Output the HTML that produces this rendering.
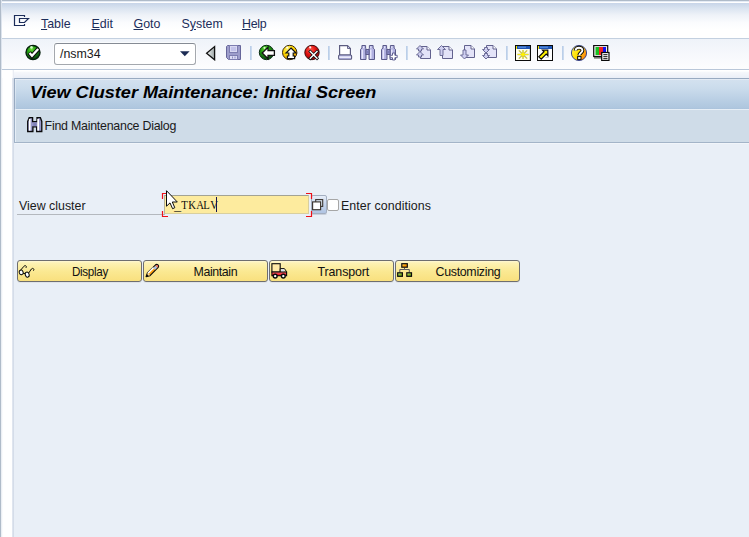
<!DOCTYPE html>
<html>
<head>
<meta charset="utf-8">
<title>View Cluster Maintenance</title>
<style>
html,body{margin:0;padding:0;}
body{width:749px;height:537px;overflow:hidden;position:relative;background:#fff;font-family:"Liberation Sans",sans-serif;font-size:12px;color:#1a1a1a;}
.abs{position:absolute;}
#menubar{left:0;top:0;width:749px;height:38px;background:linear-gradient(#afbbc9 0,#afbbc9 1px,#e4ebf5 1px,#e4ebf5 2px,#fff 2px,#fff 3px,#c9d6e9 3.500px,#d9e3f0 8px,#eef2f8 15px,#fbfcfe 23px,#fff 30px);}
#menuline{left:0;top:38px;width:749px;height:1px;background:#c3d0e0;}
#toolbar{left:0;top:39px;width:749px;height:30px;background:linear-gradient(#eff3f9,#f6f8fc 50%,#fdfdfe);}
#toolline{left:0;top:69px;width:749px;height:1px;background:#b9c7d9;}
#gap{left:0;top:70px;width:749px;height:8px;background:linear-gradient(#ffffff 0,#ffffff 12%,#f5f7fb 30%,#eaeef7 100%);}
#leftband{left:0;top:70px;width:14px;height:467px;background:linear-gradient(90deg,#afbbc9 0,#afbbc9 1px,#e3e8ef 1px,#f4f6f9 2px,#fff 3px,#fff 12px,#dfe5ef 12.5px,#cfd8e6 14px);}
#content{left:14px;top:78px;width:735px;height:459px;background:#e9eff7;}
#titlebar{left:14px;top:78px;width:735px;height:31px;box-sizing:border-box;border-top:1px solid #98aac1;border-left:1px solid #98aac1;background:linear-gradient(90deg,rgba(255,255,255,0.350) 0,rgba(255,255,255,0.350) 1px,rgba(255,255,255,0) 1px),linear-gradient(#e3ebf5 0,#e3ebf5 1px,#d3e1ef 1px,#cbdcec 30%,#b7cde3 75%,#aec6de 97%,#a8c0da 100%);}
#titleline{left:15px;top:109px;width:734px;height:1px;background:#e6eef6;}
#apptb{left:14px;top:109px;width:735px;height:33px;box-sizing:border-box;border-left:1px solid #a0b2c7;background:linear-gradient(90deg,#e6eef6 0,#e6eef6 1px,#cfdce8 1px);}
#apptbline{left:14px;top:142px;width:735px;height:1px;background:#a3b4c8;}
#apptbline2{left:15px;top:143px;width:734px;height:1px;background:#f1f5fa;}
.menu{top:17px;font-size:12.4px;line-height:14px;color:#1c2d5a;white-space:nowrap;}
.menu u{text-decoration:underline;text-underline-offset:1px;}
#title{left:30px;top:82px;font:italic bold 16.5px/20px "Liberation Sans",sans-serif;color:#000;white-space:nowrap;transform-origin:0 0;transform:scaleX(1.097);}
.lbl{white-space:nowrap;color:#1a1a1a;}
.btn{top:260px;height:22px;box-sizing:border-box;border:1px solid #6e6e70;border-radius:3px;background:linear-gradient(#fff8d4 0,#fdf2b4 2px,#fbe993 50%,#f9e07e 100%);box-shadow:0 1px 0 #dfe3e8;}
.btn span{position:absolute;top:4px;white-space:nowrap;color:#111;font-size:12.4px;line-height:14px;}
.sep{top:46px;width:2px;height:14px;background:linear-gradient(90deg,#b3c9e6,#d3e0f1);}
#leftedge{left:0;top:0;width:2px;height:70px;background:linear-gradient(90deg,#afbbc9 0,#afbbc9 1px,#dde4ee 1px,#dde4ee 2px);}
.mc{display:inline-block;width:7.200px;text-align:center;transform:scaleX(0.930);}
</style>
</head>
<body>
<div class="abs" id="menubar"></div>
<div class="abs" id="menuline"></div>
<div class="abs" id="toolbar"></div>
<div class="abs" id="toolline"></div>
<div class="abs" id="gap"></div>
<div class="abs" id="content"></div>
<div class="abs" id="leftband"></div>
<div class="abs" id="leftedge"></div>
<div class="abs" style="left:2px;top:70px;width:12px;height:8px;background:linear-gradient(90deg,#ffffff 0,#ffffff 10px,#f1f3f8 11px,#e3e7f0 12px);"></div>
<div class="abs" id="titlebar"></div>
<div class="abs" id="apptb"></div>
<div class="abs" id="titleline"></div>
<div class="abs" id="apptbline"></div>
<div class="abs" id="apptbline2"></div>

<!-- menu icon -->
<svg class="abs" style="left:13px;top:14px" width="18" height="14" viewBox="0 0 18 14">
<path d="M11.5 3V1.5H1.5V11.5H11.5V10" fill="none" stroke="#1c2d5a" stroke-width="1.2"/>
<path d="M6.5 4.5H15.5L11.5 8.5H6.5Z" fill="none" stroke="#1c2d5a" stroke-width="1.2"/>
</svg>
<div class="abs menu" id="m1" style="left:41px"><u>T</u>able</div>
<div class="abs menu" id="m2" style="left:91.500px"><u>E</u>dit</div>
<div class="abs menu" id="m3" style="left:133.500px"><u>G</u>oto</div>
<div class="abs menu" id="m4" style="left:181.500px">S<u>y</u>stem</div>
<div class="abs menu" id="m5" style="left:242px;letter-spacing:-0.250px"><u>H</u>elp</div>

<!-- command field -->
<div class="abs" style="left:54px;top:43px;width:142px;height:22px;box-sizing:border-box;border:1px solid #a4a8ae;border-top-color:#858b94;border-radius:3px;background:#fff;box-shadow:0 0 0 1px rgba(255,255,255,0.6);"></div>
<div class="abs lbl" id="cmd" style="left:60px;top:47px;font-size:12.4px;line-height:14px;">/nsm34</div>
<svg class="abs" style="left:180px;top:51px" width="10" height="6"><path d="M0 0.300H9.600L4.800 5.300Z" fill="#1c2c54"/></svg>

<!-- toolbar icons -->
<svg width="0" height="0" style="position:absolute"><defs>
<radialGradient id="gGreen" cx="0.4" cy="0.28" r="0.7"><stop offset="0" stop-color="#6fe03a"/><stop offset="0.4" stop-color="#23a012"/><stop offset="1" stop-color="#0a4a10"/></radialGradient>
<radialGradient id="gYel" cx="0.4" cy="0.3" r="0.75"><stop offset="0" stop-color="#fff27a"/><stop offset="0.5" stop-color="#ffd800"/><stop offset="1" stop-color="#e08a00"/></radialGradient>
<radialGradient id="gRed" cx="0.4" cy="0.3" r="0.75"><stop offset="0" stop-color="#ff5a4a"/><stop offset="0.5" stop-color="#e01010"/><stop offset="1" stop-color="#8a0808"/></radialGradient>
<linearGradient id="gTri" x1="0" x2="1"><stop offset="0" stop-color="#f4f6f6"/><stop offset="1" stop-color="#9fa8a8"/></linearGradient>
</defs></svg>

<!-- enter (green check) -->
<svg class="abs" style="left:25px;top:44px" width="17" height="17" viewBox="0 0 17 17">
<circle cx="8" cy="8.500" r="7" fill="url(#gGreen)" stroke="#06200c" stroke-width="1.400"/>
<circle cx="6.500" cy="3.400" r="1.300" fill="#d8ffd0" opacity="0.950"/>
<path d="M4.300 8.600L7 12L13.600 4.600" fill="none" stroke="#0a0a0a" stroke-width="4.200" stroke-linecap="butt" stroke-linejoin="miter"/>
<path d="M4.600 8.900L7 11.700L13.200 4.900" fill="none" stroke="#fff" stroke-width="2.300" stroke-linecap="butt" stroke-linejoin="miter"/>
</svg>

<!-- triangle -->
<svg class="abs" style="left:205px;top:45px" width="12" height="16" viewBox="0 0 12 16">
<path d="M1.6 8.2L9.6 1.6V14.8Z" fill="url(#gTri)" stroke="#111" stroke-width="1.3" stroke-linejoin="miter"/>
</svg>

<!-- save -->
<svg class="abs" style="left:226px;top:45px" width="16" height="16" viewBox="0 0 16 16">
<path d="M1.5 0.5H14.5V14.5H2.5L0.5 12.5V1.5Z" fill="#9d9dcb" stroke="#66669a" stroke-width="1"/>
<rect x="3.5" y="0.5" width="8" height="7" fill="#d9d9f2" stroke="#7d7db0" stroke-width="1"/>
<rect x="5" y="2" width="5" height="4" fill="#c3c3ea"/>
<rect x="3.5" y="10.5" width="8" height="4" fill="#dcdcf4" stroke="#7d7db0" stroke-width="1"/>
<rect x="6" y="11.5" width="1" height="2" fill="#8c8cc0"/><rect x="8" y="11.5" width="2" height="2" fill="#b4b4de"/>
</svg>
<div class="abs sep" style="left:250px"></div>

<!-- back -->
<svg class="abs" style="left:258px;top:44px" width="18" height="17" viewBox="0 0 18 17">
<circle cx="8.5" cy="8.5" r="7.2" fill="url(#gGreen)" stroke="#0a2a14" stroke-width="1"/>
<circle cx="6.5" cy="3.8" r="1.1" fill="#e8ffe0" opacity="0.9"/>
<path d="M4.200 9L10 3.300V6.700H16.400V11.300H10V14.700Z" fill="#fff" stroke="#111" stroke-width="1.300" stroke-linejoin="miter"/>
</svg>

<!-- exit -->
<svg class="abs" style="left:281px;top:44px" width="18" height="17" viewBox="0 0 18 17">
<circle cx="8.7" cy="8.5" r="7.2" fill="url(#gYel)" stroke="#3a2a10" stroke-width="1"/>
<circle cx="6.2" cy="3.6" r="1.1" fill="#fff" opacity="0.95"/>
<path d="M10 4L15 9H12.2V12H13.6V14.6H6.4V12H7.8V9H5Z" fill="#fff" stroke="#111" stroke-width="1.2" stroke-linejoin="miter"/>
</svg>

<!-- cancel -->
<svg class="abs" style="left:304px;top:44px" width="18" height="17" viewBox="0 0 18 17">
<circle cx="8" cy="8.5" r="7.2" fill="url(#gRed)" stroke="#3a0a0a" stroke-width="1"/>
<circle cx="6.2" cy="3.4" r="1.1" fill="#fff" opacity="0.95"/>
<path d="M6.300 7.600L13 14.300M13 7.600L6.300 14.300" fill="none" stroke="#111" stroke-width="3" stroke-linecap="square"/>
<path d="M6.300 7.600L13 14.300M13 7.600L6.300 14.300" fill="none" stroke="#fff" stroke-width="1.400" stroke-linecap="square"/>
</svg>
<div class="abs sep" style="left:328px"></div>

<!-- print -->
<svg class="abs" style="left:338px;top:45px" width="16" height="16" viewBox="0 0 16 16">
<path d="M1.600 0.600H9.500L12.400 3.500V10H1.600Z" fill="#fff" stroke="#5c5c80" stroke-width="1.200"/>
<path d="M9.500 0.600V3.500H12.400Z" fill="#d4d4f4" stroke="#5c5c80" stroke-width="0.900" stroke-linejoin="round"/>
<rect x="0.600" y="10" width="13" height="4.300" rx="1" fill="#bcbcec" stroke="#5c5c80" stroke-width="1.100"/>
<rect x="1.300" y="11.600" width="11.600" height="1.100" fill="#ffffff"/>
</svg>

<!-- find -->
<svg class="abs" style="left:360px;top:45px" width="16" height="16" viewBox="0 0 16 16">
<path d="M1.900 0.500H5.600V3.200L6 3.800V14.500H0.500V4.400L1.900 3Z" fill="#b0b0e0" stroke="#5a5a8a" stroke-width="1" stroke-linejoin="miter"/>
<path d="M9.400 0.500H13.100V3L14.500 4.400V14.500H9V3.800L9.400 3.200Z" fill="#b0b0e0" stroke="#5a5a8a" stroke-width="1" stroke-linejoin="miter"/>
<rect x="1.600" y="4.500" width="1.500" height="9.300" fill="#e6e6fb"/><rect x="10" y="4.500" width="1.500" height="9.300" fill="#e6e6fb"/>
<rect x="3" y="1.300" width="1.200" height="2" fill="#e6e6fb"/><rect x="10.200" y="1.300" width="1.200" height="2" fill="#e6e6fb"/>
<rect x="6" y="4.500" width="3" height="5" fill="#9a9ad0" stroke="#5a5a8a" stroke-width="1"/>
<rect x="6.800" y="6" width="1.400" height="2.400" fill="#7c7cb8"/>
</svg>

<!-- find next -->
<svg class="abs" style="left:381px;top:45px" width="17" height="16" viewBox="0 0 17 16">
<path d="M1.900 0.500H5.600V3.200L6 3.800V14.500H0.500V4.400L1.900 3Z" fill="#b0b0e0" stroke="#5a5a8a" stroke-width="1" stroke-linejoin="miter"/>
<path d="M9.400 0.500H13.100V3L14.500 4.400V14.500H9V3.800L9.400 3.200Z" fill="#b0b0e0" stroke="#5a5a8a" stroke-width="1" stroke-linejoin="miter"/>
<rect x="1.600" y="4.500" width="1.500" height="9.300" fill="#e6e6fb"/><rect x="10" y="4.500" width="1.500" height="9.300" fill="#e6e6fb"/>
<rect x="3" y="1.300" width="1.200" height="2" fill="#e6e6fb"/><rect x="10.200" y="1.300" width="1.200" height="2" fill="#e6e6fb"/>
<rect x="6" y="4.500" width="3" height="5" fill="#9a9ad0" stroke="#5a5a8a" stroke-width="1"/>
<rect x="6.800" y="6" width="1.400" height="2.400" fill="#7c7cb8"/>
<path d="M11.500 8H13.900V10.300H16.200V12.700H13.900V15H11.500V12.700H9.200V10.300H11.500Z" fill="#fff" stroke="#55558a" stroke-width="0.900"/>
</svg>
<div class="abs sep" style="left:406px"></div>

<!-- first page -->
<svg class="abs" style="left:416px;top:45px" width="16" height="15" viewBox="0 0 16 15">
<path d="M4.500 1.500H11L14.500 5V13.500H4.500Z" fill="#e3e3f8" stroke="#62628e" stroke-width="1"/>
<path d="M11 1.500V5H14.500" fill="#fff" stroke="#62628e" stroke-width="1"/>
<path d="M4 0.500L7.500 4H5.500V6H2.500V4H0.500Z" fill="#cfcff0" stroke="#62628e" stroke-width="0.900"/>
<path d="M4 6.500L7.500 10H5.500V12H2.500V10H0.500Z" fill="#cfcff0" stroke="#62628e" stroke-width="0.900"/>
</svg>
<!-- prev page -->
<svg class="abs" style="left:437px;top:45px" width="16" height="15" viewBox="0 0 16 15">
<path d="M5.500 1.500H12L15.500 5V13.500H5.500Z" fill="#e3e3f8" stroke="#62628e" stroke-width="1"/>
<path d="M12 1.500V5H15.500" fill="#fff" stroke="#62628e" stroke-width="1"/>
<path d="M4.500 0.500L8.500 4.500H6V10.500H3V4.500H0.500Z" fill="#cfcff0" stroke="#62628e" stroke-width="0.900"/>
</svg>
<!-- next page -->
<svg class="abs" style="left:460px;top:45px" width="16" height="15" viewBox="0 0 16 15">
<path d="M4.500 0.500H11L14.500 4V12.500H4.500Z" fill="#e3e3f8" stroke="#62628e" stroke-width="1"/>
<path d="M11 0.500V4H14.500" fill="#fff" stroke="#62628e" stroke-width="1"/>
<path d="M4.500 14L8.500 10H6V5H3V10H0.500Z" fill="#cfcff0" stroke="#62628e" stroke-width="0.900"/>
</svg>
<!-- last page -->
<svg class="abs" style="left:482px;top:45px" width="16" height="15" viewBox="0 0 16 15">
<path d="M4.500 0.500H11L14.500 4V12.500H4.500Z" fill="#e3e3f8" stroke="#62628e" stroke-width="1"/>
<path d="M11 0.500V4H14.500" fill="#fff" stroke="#62628e" stroke-width="1"/>
<path d="M4 8L7.500 4.500H5.500V2.500H2.500V4.500H0.500Z" fill="#cfcff0" stroke="#62628e" stroke-width="0.900"/>
<path d="M4 14L7.500 10.500H5.500V8.500H2.500V10.500H0.500Z" fill="#cfcff0" stroke="#62628e" stroke-width="0.900"/>
</svg>
<div class="abs sep" style="left:506px"></div>

<!-- new session -->
<svg class="abs" style="left:515px;top:45px" width="16" height="16" viewBox="0 0 16 16">
<rect x="0.500" y="0.500" width="15" height="15" fill="#ffffee" stroke="#0a0a0a" stroke-width="1"/>
<rect x="1" y="1" width="14" height="3" fill="#1f55b5"/>
<rect x="1" y="1" width="1" height="3" fill="#f4e400"/>
<rect x="3" y="1.500" width="8" height="1.500" fill="#4f86d8"/>
<rect x="14" y="4" width="1" height="11" fill="#d8d8d0"/>
<path d="M8 5V14M2.500 9.500H13.500M4 5.500L12 13.500M12 5.500L4 13.500" stroke="#333" stroke-width="1.300" fill="none" opacity="0.450"/>
<path d="M8 5V14M2.500 9.500H13.500M4 5.500L12 13.500M12 5.500L4 13.500" stroke="#fff200" stroke-width="0.900" fill="none"/>
<circle cx="8" cy="9.500" r="1.700" fill="#fff200"/>
</svg>
<!-- shortcut -->
<svg class="abs" style="left:537px;top:45px" width="16" height="16" viewBox="0 0 16 16">
<rect x="0.500" y="0.500" width="15" height="15" fill="#fff" stroke="#0a0a0a" stroke-width="1"/>
<rect x="1" y="1" width="14" height="3" fill="#1f55b5"/>
<rect x="1" y="1" width="1" height="3" fill="#f4e400"/>
<rect x="3" y="1.500" width="8" height="1.500" fill="#4f86d8"/>
<path d="M11 7.500V12.500H8.500" fill="none" stroke="#c8c8d0" stroke-width="1.200"/>
<path d="M5.500 5.200H10.800V10.500L9.200 9L4.200 14.200L1.800 11.800L7 6.800Z" fill="#fff200" stroke="#0a0a0a" stroke-width="1.200" stroke-linejoin="miter"/>
</svg>
<div class="abs sep" style="left:562px"></div>

<!-- help -->
<svg class="abs" style="left:570px;top:44px" width="18" height="18" viewBox="0 0 18 18">
<defs><linearGradient id="gHelp" x1="0" x2="1" y1="0.200" y2="0.800"><stop offset="0" stop-color="#fff04a"/><stop offset="0.450" stop-color="#ffe000"/><stop offset="0.800" stop-color="#ff9a10"/><stop offset="1" stop-color="#f07800"/></linearGradient></defs>
<circle cx="9" cy="9" r="7.600" fill="url(#gHelp)" stroke="#2a3a8a" stroke-width="0.900"/>
<path d="M5.600 6.600C5.600 2.800 12.400 2.800 12.400 6.400C12.400 8.600 9.300 8.800 9.300 11.300" fill="none" stroke="#0a0a0a" stroke-width="3.800"/>
<path d="M5.600 6.600C5.600 2.800 12.400 2.800 12.400 6.400C12.400 8.600 9.300 8.800 9.300 11.300" fill="none" stroke="#fff" stroke-width="1.900"/>
<rect x="7.600" y="12.600" width="3.400" height="2.800" fill="#fff" stroke="#0a0a0a" stroke-width="1"/>
</svg>
<!-- layout -->
<svg class="abs" style="left:593px;top:45px" width="17" height="16" viewBox="0 0 17 16">
<rect x="0.700" y="0.500" width="14" height="11" fill="#f0f0f0" stroke="#0a0a0a" stroke-width="1.200"/>
<rect x="2.500" y="2" width="3.500" height="8" fill="#18c020"/><rect x="6" y="2" width="4" height="8" fill="#f02020"/><rect x="10" y="2" width="3" height="8" fill="#1010f0"/>
<rect x="1" y="12.200" width="9" height="1.300" fill="#555"/>
<rect x="8.700" y="7.500" width="7.300" height="8" fill="#fff" stroke="#0a0a0a" stroke-width="1.200"/>
<path d="M10.300 9.700H14.500M10.300 11.700H14.500M10.300 13.700H14.500" stroke="#0a0a0a" stroke-width="1"/>
</svg>

<div class="abs" id="title">View Cluster Maintenance: Initial Screen</div>

<!-- app toolbar: find -->
<svg class="abs" style="left:27px;top:117px" width="16" height="16" viewBox="0 0 16 16">
<path d="M2.200 0.700H5.600V4.700H10V0.700H13.400L14.800 4.400V14.500H9.700V9.800H5.900V14.500H0.700V4.400Z" fill="#9898c8" stroke="#0a0a0a" stroke-width="1.300" stroke-linejoin="miter"/>
<rect x="1.900" y="2" width="1.700" height="11.600" fill="#fff"/><rect x="10.300" y="2" width="1.700" height="11.600" fill="#fff"/>
<rect x="6.300" y="5.400" width="3.200" height="3.800" fill="#8080b8"/>
</svg>
<div class="abs lbl" id="find" style="left:44.600px;letter-spacing:-0.240px;top:119px;font-size:12.400px;line-height:14px;">Find Maintenance Dialog</div>

<!-- form -->
<div class="abs lbl" id="vc" style="left:19px;top:199px;font-size:12.400px;line-height:14px;">View cluster</div>
<div class="abs" style="left:17px;top:214px;width:148px;height:1px;background:#b4b8be;"></div>
<div class="abs" style="left:164px;top:195px;width:145px;height:19px;background:#fdeb9e;border:1px solid #d9cf9e;border-top-color:#a3a394;border-left-color:#b5b29c;box-sizing:border-box;"></div>
<div class="abs" id="inp" style="left:174px;top:198px;font:11.500px/14px 'Liberation Serif',serif;color:#0c0c0c;white-space:nowrap;"><span style="display:inline-block;width:7.200px;text-align:center;position:relative;top:1px;font-family:'Liberation Mono',monospace;font-size:12px">_</span><span class="mc">T</span><span class="mc">K</span><span class="mc">A</span><span class="mc">L</span><span class="mc">V</span></div>
<div class="abs" style="left:216px;top:197px;width:1px;height:15px;background:#141450;"></div>
<!-- F4 help button -->
<div class="abs" style="left:310.500px;top:195px;width:16.500px;height:19px;box-sizing:border-box;border:1px solid #a3aec0;border-radius:2px;background:linear-gradient(#e6edf8,#c6d5ec 50%,#b0c4e3);box-shadow:0 1px 0 #c9d0dc;"></div>
<svg class="abs" style="left:312px;top:199px" width="12" height="12" viewBox="0 0 12 12">
<rect x="3.700" y="0.600" width="7" height="6.800" fill="#dbe6f2" stroke="#3c3630" stroke-width="1.100"/>
<rect x="0.600" y="2.900" width="8" height="7.800" fill="#fff" stroke="#3c3630" stroke-width="1.150"/>
</svg>
<!-- red focus brackets -->
<svg class="abs" style="left:161px;top:192px" width="8" height="26" viewBox="0 0 8 26"><path d="M7 1.500H1.500V7M1.500 19V24.500H7" fill="none" stroke="#ee1018" stroke-width="1.200"/></svg>
<svg class="abs" style="left:305px;top:192px" width="8" height="26" viewBox="0 0 8 26"><path d="M1 1.500H6.500V7M6.500 19V24.500H1" fill="none" stroke="#ee1018" stroke-width="1.200"/></svg>
<!-- checkbox -->
<div class="abs" style="left:327px;top:199px;width:12px;height:12px;box-sizing:border-box;border:1px solid #a6a6a6;border-radius:2px;background:#fff;"></div>
<div class="abs lbl" id="ec" style="left:341px;letter-spacing:0.070px;top:199px;font-size:12.400px;line-height:14px;">Enter conditions</div>

<!-- mouse cursor -->
<svg class="abs" style="left:165px;top:189px" width="15" height="22" viewBox="0 0 15 22">
<path d="M1.500 1.700V17.200L5 13.900L7.600 19.700L9.800 18.700L7.300 13H12.300Z" fill="#fff" stroke="#0a0a0a" stroke-width="1" stroke-linejoin="miter"/>
</svg>

<!-- buttons -->
<div class="abs btn" style="left:17px;width:125px;"><span id="b1" style="left:53.500px;letter-spacing:-0.350px;transform-origin:0 0;transform:scaleX(0.940)">Display</span></div>
<div class="abs btn" style="left:143px;width:125px;"><span id="b2" style="left:49.500px;letter-spacing:-0.400px">Maintain</span></div>
<div class="abs btn" style="left:269px;width:125px;"><span id="b3" style="left:47.600px;letter-spacing:-0.120px">Transport</span></div>
<div class="abs btn" style="left:395px;width:125px;"><span id="b4" style="left:39.500px;letter-spacing:-0.300px">Customizing</span></div>

<!-- button icons -->
<!-- glasses -->
<svg class="abs" style="left:18px;top:263px" width="18" height="16" viewBox="0 0 18 16">
<path d="M1.700 8.200L6 3.200C7.400 1.700 9.400 3.400 7.700 5" fill="none" stroke="#0a0a0a" stroke-width="1"/>
<ellipse cx="3.200" cy="9.400" rx="1.900" ry="2.300" transform="rotate(-20 3.200 9.400)" fill="#fff" stroke="#0a0a0a" stroke-width="1"/>
<ellipse cx="9.200" cy="11.600" rx="1.900" ry="2.600" transform="rotate(-20 9.200 11.600)" fill="#fff" stroke="#0a0a0a" stroke-width="1"/>
<path d="M5 10.300L7.300 10.600" stroke="#0a0a0a" stroke-width="1"/>
<path d="M10.700 10L13.400 6C14.800 4.400 16.900 6.200 15.300 7.800" fill="none" stroke="#0a0a0a" stroke-width="1"/>
</svg>
<!-- pencil -->
<svg class="abs" style="left:145px;top:263px" width="16" height="15" viewBox="0 0 16 15">
<path d="M1.100 13.700L2.400 10L10.600 1.800Q11.800 0.800 13 2Q14.200 3.200 13.200 4.400L5 12.600Z" fill="#ffa010" stroke="#0a0a0a" stroke-width="1.150" stroke-linejoin="round"/>
<path d="M3 10.200L8.600 4.600" stroke="#fff" stroke-width="1.500"/>
<path d="M8.300 4.900L10.400 2.800L12.200 4.600L10.100 6.700Z" fill="#a9c1e6"/>
<path d="M10.600 2.600Q11.800 1.500 12.800 2.500Q13.600 3.400 12.600 4.400Z" fill="#f0707c"/>
<path d="M2.500 10.600L4.400 12.400" stroke="#f2dca0" stroke-width="1.400"/>
<path d="M1.100 13.700L2 11.300L3.600 12.900Z" fill="#0a0a0a"/>
</svg>
<!-- truck -->
<svg class="abs" style="left:270px;top:263px" width="18" height="16" viewBox="0 0 18 16">
<rect x="1.900" y="0.700" width="8.300" height="8.300" fill="#ffe9a6" stroke="#0a0a0a" stroke-width="1.100"/>
<path d="M10.200 5.600H14.400L16.500 8.600V9.200H10.200Z" fill="#fdeeb4" stroke="#0a0a0a" stroke-width="1" stroke-linejoin="miter"/>
<rect x="11.200" y="6.300" width="3" height="2.300" fill="#d6e2fa"/>
<rect x="1.900" y="9.100" width="14.700" height="3.600" fill="#f01222" stroke="#0a0a0a" stroke-width="1.100"/>
<rect x="2.500" y="9.700" width="13.500" height="0.700" fill="#f8a6a6" opacity="0.800"/>
<circle cx="5.200" cy="13.100" r="1.900" fill="#fff" stroke="#0a0a0a" stroke-width="1.400"/>
<circle cx="13.300" cy="13.100" r="1.900" fill="#fff" stroke="#0a0a0a" stroke-width="1.400"/>
</svg>
<!-- hierarchy -->
<svg class="abs" style="left:397px;top:263px" width="17" height="15" viewBox="0 0 17 15">
<defs>
<linearGradient id="gOr" x1="0" y1="0" x2="1" y2="1"><stop offset="0" stop-color="#ffe890"/><stop offset="0.500" stop-color="#ffa000"/><stop offset="1" stop-color="#f07800"/></linearGradient>
<linearGradient id="gGr" x1="0" y1="0" x2="1" y2="1"><stop offset="0" stop-color="#d8f0a0"/><stop offset="0.500" stop-color="#84b828"/><stop offset="1" stop-color="#5a9010"/></linearGradient>
</defs>
<path d="M7.500 4.800V6.500H2.800V9.500M7.500 6.500H12.300V9.500" fill="none" stroke="#4a4a58" stroke-width="0.900"/>
<rect x="4.800" y="0.700" width="5.500" height="3.500" fill="url(#gOr)" stroke="#0a0a0a" stroke-width="1.200"/>
<rect x="0.700" y="9.800" width="4.700" height="3.500" fill="url(#gGr)" stroke="#0a0a0a" stroke-width="1.200"/>
<rect x="9.800" y="9.800" width="4.700" height="3.500" fill="url(#gGr)" stroke="#0a0a0a" stroke-width="1.200"/>
</svg>
</body>
</html>
